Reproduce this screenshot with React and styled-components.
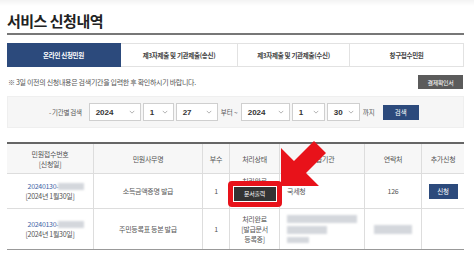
import styled, { createGlobalStyle } from 'styled-components'

const GlobalStyle = createGlobalStyle`
  html, body {
    margin: 0;
    background: #fff;
    font-family: "Noto Sans CJK KR", "Noto Sans", sans-serif;
    color: #333;
  }
`

const COLS = '87px 109px 27px 50px 85px 57px 42px'

const tabs = ['온라인 신청민원', '제3자제출 및 기관제출(송신)', '제3자제출 및 기관제출(수신)', '창구접수민원']
const tabWidths = [114, 117, 112, 114]

export default function App() {
  return (
    <Page>
      <GlobalStyle />
      <Title>서비스 신청내역</Title>

      <Tabs>
        {tabs.map((t, i) => (
          <Tab key={t} $active={i === 0} $w={tabWidths[i]}>{t}</Tab>
        ))}
      </Tabs>

      <NoticeRow>
        <Notice>※ 3일 이전의 신청내용은 검색기간을 입력한 후 확인하시기 바랍니다.</Notice>
        <GrayButton>결제확인서</GrayButton>
      </NoticeRow>

      <SearchBox>
        <SearchLabel>- 기간별 검색</SearchLabel>
        <Select $w={52}>2024<Chevron /></Select>
        <Select $w={31}>1<Chevron /></Select>
        <Select $w={42}>27<Chevron /></Select>
        <SearchText>부터 ~</SearchText>
        <Select $w={49}>2024<Chevron /></Select>
        <Select $w={33}>1<Chevron /></Select>
        <Select $w={33}>30<Chevron /></Select>
        <SearchText>까지</SearchText>
        <BlueButton $w={36} $h={15} $gap={5}>검색</BlueButton>
      </SearchBox>

      <TableWrap>
        <HeadRow>
          <HeadCell>민원접수번호<br />[신청일]</HeadCell>
          <HeadCell>민원사무명</HeadCell>
          <HeadCell>부수</HeadCell>
          <HeadCell>처리상태</HeadCell>
          <HeadCell>발급기관</HeadCell>
          <HeadCell>연락처</HeadCell>
          <HeadCell $last>추가신청</HeadCell>
        </HeadRow>

        <BodyRow $h={34}>
          <Cell>
            <ReceiptNo>20240130-<Blur $w={26} /></ReceiptNo>
            <div>[2024년 1월30일]</div>
          </Cell>
          <Cell>소득금액증명 발급</Cell>
          <Cell>1</Cell>
          <Cell>
            <div>처리완료</div>
            <Highlight><DarkButton>문서출력</DarkButton></Highlight>
          </Cell>
          <Cell $left>국세청</Cell>
          <Cell>126</Cell>
          <Cell $last><BlueButton $w={29} $h={15}>신청</BlueButton></Cell>
        </BodyRow>

        <BodyRow $h={40}>
          <Cell>
            <ReceiptNo>20240130-<Blur $w={26} /></ReceiptNo>
            <div>[2024년 1월30일]</div>
          </Cell>
          <Cell>주민등록표 등본 발급</Cell>
          <Cell>1</Cell>
          <Cell>
            <div>처리완료</div>
            <div>[발급문서</div>
            <div>등록중]</div>
          </Cell>
          <Cell>
            <BlurStack>
              <Blur $w={70} $h={8} />
              <Blur $w={40} $h={8} />
              <Blur $w={22} $h={6} />
            </BlurStack>
          </Cell>
          <Cell><Blur $w={38} $h={9} /></Cell>
          <Cell $last />
        </BodyRow>

        <Arrow viewBox="0 0 52 50" width="52" height="50">
          <polygon
            points="3,8 16,21 36,1 48,13 28,33 41,46 3,46"
            fill="#e8121a"
          />
        </Arrow>
      </TableWrap>
    </Page>
  )
}

function Chevron() {
  return (
    <ChevronSvg viewBox="0 0 8 5" width="6" height="4">
      <path d="M1 1l3 3 3-3" fill="none" stroke="#999" strokeWidth="1" />
    </ChevronSvg>
  )
}

const Page = styled.div`
  width: 457px;
  padding: 0 10px 0 7px;
  background: linear-gradient(#f3f3f3, #fff 6px);
`

const Title = styled.h1`
  margin: 0;
  padding-top: 11px;
  padding-bottom: 2px;
  height: 20px;
  line-height: 20px;
  font-size: 15px;
  font-weight: 700;
  letter-spacing: -0.5px;
  color: #222;
  border-bottom: 2px solid #777;
`

const Tabs = styled.div`
  display: flex;
  margin-top: 8px;
  height: 24px;
`

const Tab = styled.div`
  width: ${p => p.$w}px;
  box-sizing: border-box;
  display: flex;
  align-items: center;
  justify-content: center;
  font-size: 6.5px;
  font-weight: 700;
  letter-spacing: -0.3px;
  background: ${p => (p.$active ? '#2c4a7c' : '#fff')};
  color: ${p => (p.$active ? '#fff' : '#444')};
  border: 1px solid ${p => (p.$active ? '#2c4a7c' : '#e2e2e2')};
  border-left-width: 0;
`

const NoticeRow = styled.div`
  display: flex;
  align-items: center;
  justify-content: space-between;
  height: 18px;
  margin-top: 6px;
`

const Notice = styled.div`
  font-size: 7px;
  letter-spacing: -0.3px;
  color: #555;
  padding-left: 1px;
`

const GrayButton = styled.div`
  width: 45px;
  height: 14px;
  display: flex;
  align-items: center;
  justify-content: center;
  background: #5b5b5b;
  color: #fff;
  font-size: 6px;
  letter-spacing: -0.3px;
  margin-right: 1px;
`

const SearchBox = styled.div`
  display: flex;
  align-items: center;
  gap: 2px;
  height: 32px;
  margin-top: 5px;
  padding-left: 41px;
  background: #f6f6f6;
  border: 1px solid #efefef;
  box-sizing: border-box;
`

const SearchLabel = styled.span`
  font-size: 6.5px;
  color: #555;
  letter-spacing: -0.3px;
  margin-right: 5px;
`

const SearchText = styled.span`
  font-size: 6.5px;
  color: #555;
  margin: 0 1px;
`

const Select = styled.div`
  width: ${p => p.$w}px;
  height: 18px;
  box-sizing: border-box;
  display: flex;
  align-items: center;
  justify-content: space-between;
  padding: 0 5px 0 6px;
  background: #fff;
  border: 1px solid #cfcfcf;
  font-family: "Liberation Sans", Arial, sans-serif;
  font-size: 8px;
  font-weight: 700;
  color: #333;
`

const ChevronSvg = styled.svg`
  display: block;
`

const BlueButton = styled.div`
  width: ${p => p.$w}px;
  height: ${p => p.$h}px;
  display: inline-flex;
  align-items: center;
  justify-content: center;
  background: #2c4a7c;
  color: #fff;
  font-size: 6.5px;
  margin-left: ${p => p.$gap || 0}px;
`

const TableWrap = styled.div`
  position: relative;
  margin-top: 14px;
  border-top: 2px solid #666;
  border-bottom: 1px solid #999;
`

const HeadRow = styled.div`
  display: grid;
  grid-template-columns: ${COLS};
  height: 29px;
  background: #f7f7f7;
  border-bottom: 1px solid #ddd;
`

const HeadCell = styled.div`
  display: flex;
  align-items: center;
  justify-content: center;
  text-align: center;
  font-size: 7px;
  line-height: 10px;
  letter-spacing: -0.3px;
  color: #555;
  border-right: ${p => (p.$last ? 'none' : '1px solid #ddd')};
`

const BodyRow = styled.div`
  display: grid;
  grid-template-columns: ${COLS};
  height: ${p => p.$h}px;
  & + & {
    border-top: 1px solid #ddd;
  }
`

const Cell = styled.div`
  display: flex;
  flex-direction: column;
  align-items: ${p => (p.$left ? 'flex-start' : 'center')};
  justify-content: center;
  padding-left: ${p => (p.$left ? 7 : 0)}px;
  text-align: center;
  font-size: 7px;
  line-height: 10px;
  letter-spacing: -0.3px;
  color: #555;
  border-right: ${p => (p.$last ? 'none' : '1px solid #ddd')};
`

const ReceiptNo = styled.div`
  display: flex;
  align-items: center;
  color: #3d64a6;
  margin-left: 12px;
`

const Blur = styled.span`
  display: inline-block;
  width: ${p => p.$w}px;
  height: ${p => p.$h || 7}px;
  background: #d4d7dc;
  filter: blur(1px);
`

const BlurStack = styled.div`
  display: flex;
  flex-direction: column;
  align-items: flex-start;
  gap: 3px;
  width: 70px;
`

const Highlight = styled.div`
  position: relative;
  margin-top: -5px;
  padding: 1px;
  background: #fff;
  border: 5px solid #e8121a;
  border-radius: 4px;
`

const DarkButton = styled.div`
  width: 42px;
  height: 14px;
  display: flex;
  align-items: center;
  justify-content: center;
  background: #333;
  color: #fff;
  font-size: 6px;
`

const Arrow = styled.svg`
  position: absolute;
  left: 271px;
  top: -4px;
`
